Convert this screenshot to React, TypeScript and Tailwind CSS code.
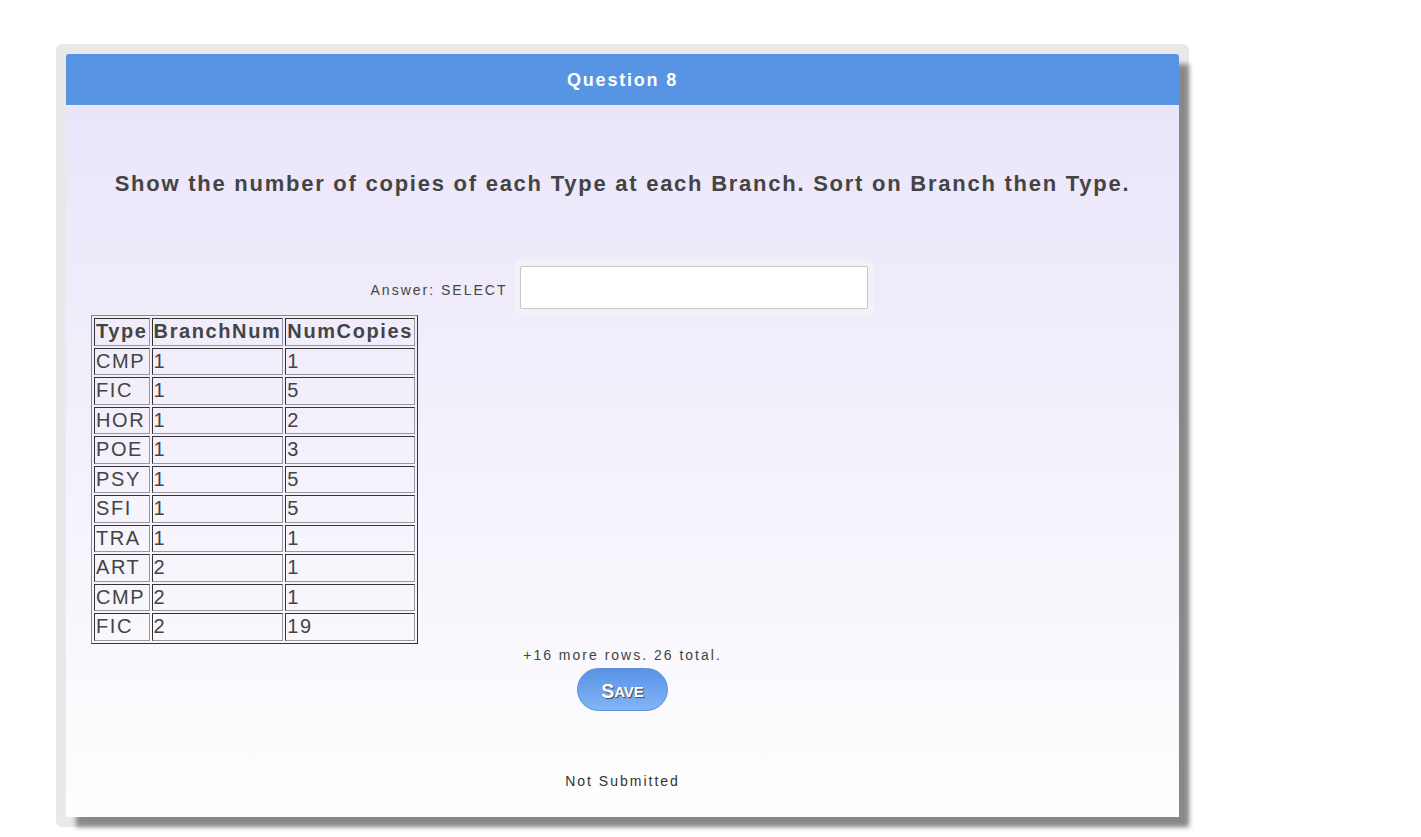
const rows: [string, string, string][] = [
  ['CMP', '1', '1'],
  ['FIC', '1', '5'],
  ['HOR', '1', '2'],
  ['POE', '1', '3'],
  ['PSY', '1', '5'],
  ['SFI', '1', '5'],
  ['TRA', '1', '1'],
  ['ART', '2', '1'],
  ['CMP', '2', '1'],
  ['FIC', '2', '19'],
];

const cell =
  'h-[27.5px] border border-t-[#333] border-l-[#333] border-r-[#999] border-b-[#999] px-[1px] py-0 text-left align-middle leading-[23px]';

export default function App() {
  return (
    <div
      className="min-h-[837px] bg-white pt-[44px] pl-[56px]"
      style={{ fontFamily: '"Liberation Sans", Arial, sans-serif' }}
    >
      <div className="w-[1133px] rounded-md bg-[#e9e9e9] p-[10px]">
        <div className="h-[763px] bg-gradient-to-b from-[#e9e3f9] to-[#fefefe] shadow-[10px_10px_5px_#888]">
          <div className="flex h-[52px] items-center justify-center rounded-t-[3px] border-b border-[#eef0fb] bg-[#5795e4] pt-[2px] text-[18px] font-bold tracking-[1.8px] text-white">
            Question 8
          </div>

          <div className="px-[25px]">
            <h2 className="pt-[65px] text-center text-[22px] leading-[26px] font-bold tracking-[1.75px] text-[#444]">
              Show the number of copies of each Type at each Branch. Sort on Branch then Type.
            </h2>

            <div className="mt-[63px] flex items-center justify-center gap-[7px]">
              <span className="pt-[5px] text-[14px] leading-[16px] tracking-[2px] text-[#444]">
                Answer: SELECT
              </span>
              <div className="rounded-md bg-[#f2f1f7] p-[6px]">
                <input
                  type="text"
                  className="block h-[43px] w-[348px] rounded-[2px] border border-[#c8c8c8] bg-white px-2 outline-none"
                />
              </div>
            </div>

            <table className="border-separate border-spacing-[2px] border border-t-[#888] border-l-[#888] border-r-[#333] border-b-[#333] text-[20px] tracking-[1.6px] text-[#444]">
              <thead>
                <tr>
                  <th className={`${cell} w-[55px] font-bold`}>Type</th>
                  <th className={`${cell} w-[131px] font-bold`}>BranchNum</th>
                  <th className={`${cell} w-[129px] font-bold`}>NumCopies</th>
                </tr>
              </thead>
              <tbody>
                {rows.map((r, i) => (
                  <tr key={i}>
                    <td className={`${cell} font-normal`}>{r[0]}</td>
                    <td className={`${cell} font-normal`}>{r[1]}</td>
                    <td className={`${cell} font-normal`}>{r[2]}</td>
                  </tr>
                ))}
              </tbody>
            </table>

            <p className="mt-[3px] text-center text-[14px] leading-[16px] tracking-[2px] text-[#444]">
              +16 more rows. 26 total.
            </p>

            <div className="mt-[5px] flex justify-center">
              <button
                type="button"
                className="flex h-[43px] w-[91px] items-center justify-center rounded-full border border-[#5a90dc] bg-gradient-to-b from-[#5993e5] to-[#83b4f7] pt-[6px] font-bold text-white [text-shadow:1px_1px_1px_#444]"
              >
                <span className="text-[19.5px]">S</span>
                <span className="text-[15px]">AVE</span>
              </button>
            </div>

            <p className="mt-[62px] text-center text-[14px] leading-[16px] tracking-[2px] text-[#333]">
              Not Submitted
            </p>
          </div>
        </div>
      </div>
    </div>
  );
}
